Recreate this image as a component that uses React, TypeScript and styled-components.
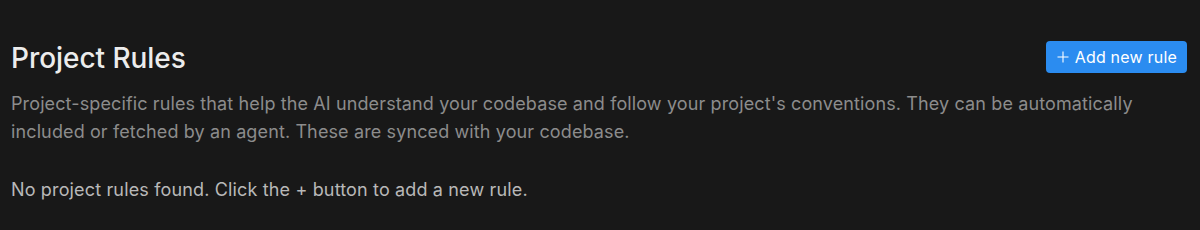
import React from "react";
import styled, { createGlobalStyle } from "styled-components";

const Global = createGlobalStyle`
  html, body { margin: 0; padding: 0; background: #181818; }
  body { font-family: Inter, "Noto Sans", sans-serif; -webkit-font-smoothing: antialiased; }
`;

const Page = styled.div`
  width: 1200px;
  height: 230px;
  box-sizing: border-box;
  padding: 41px 13px 0 11px;
  background: #181818;
`;

const Header = styled.div`
  display: flex;
  justify-content: space-between;
  align-items: flex-start;
`;

const Title = styled.h1`
  margin: 0;
  font-size: 28px;
  font-weight: 500;
  line-height: 34px;
  color: #ececec;
  letter-spacing: -0.05px;
`;

const AddButton = styled.button`
  display: flex;
  align-items: center;
  gap: 6px;
  height: 32px;
  padding: 0 10px 0 11px;
  border: none;
  border-radius: 4px;
  background: #2b8cf0;
  color: #ffffff;
  font-family: Inter, "Noto Sans", sans-serif;
  font-size: 16px;
  letter-spacing: 0.2px;
  cursor: pointer;
`;

const Description = styled.p`
  margin: 15px 0 0;
  font-size: 18px;
  line-height: 28px;
  letter-spacing: 0.12px;
  color: #8c8c8c;
  max-width: 1150px;
`;

const Empty = styled.p`
  margin: 30px 0 0;
  font-size: 18px;
  line-height: 28px;
  letter-spacing: 0.15px;
  color: #b8b8b8;
`;

export default function App() {
  return (
    <>
      <Global />
      <Page>
        <Header>
          <Title>Project Rules</Title>
          <AddButton>
            <svg width="12" height="12" viewBox="0 0 12 12" fill="none" stroke="#fff" strokeWidth="1.1">
              <path d="M6 0.5v11M0.5 6h11" />
            </svg>
            Add new rule
          </AddButton>
        </Header>
        <Description>
          Project-specific rules that help the AI understand your codebase and follow your project's conventions. They can be automatically included or fetched by an agent. These are synced with your codebase.
        </Description>
        <Empty>No project rules found. Click the + button to add a new rule.</Empty>
      </Page>
    </>
  );
}
